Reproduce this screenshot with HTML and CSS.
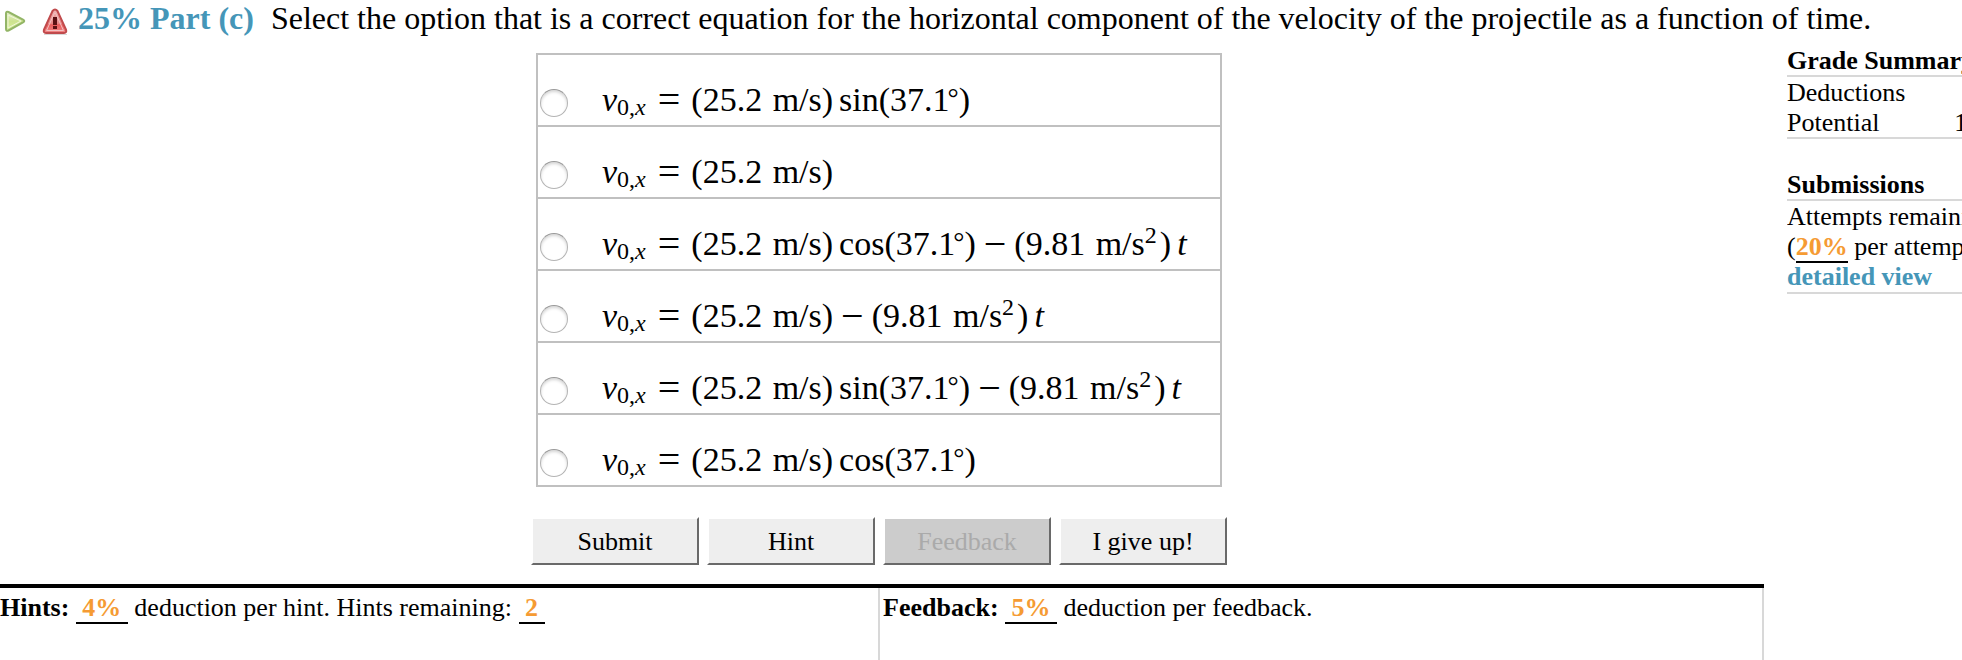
FILE: index.html
```html
<!DOCTYPE html>
<html lang="en">
<head>
    <meta charset="UTF-8">
    <title>Part (c) - Projectile Motion</title>
    <link rel="stylesheet" href="styles.css">
</head>
<body>
    <div class="question">
        <svg class="icon" width="26" height="28" viewBox="0 0 26 28">
            <defs>
                <linearGradient id="playFill" x1="0" y1="0" x2="0" y2="1">
                    <stop offset="0" stop-color="#e6efd0"/>
                    <stop offset="0.5" stop-color="#cde38f"/>
                    <stop offset="1" stop-color="#d9f09a"/>
                </linearGradient>
            </defs>
            <path d="M2 5.500 Q2 3 4.500 4 L19 11.500 Q21.500 13 19 14.500 L4.500 22.500 Q2 23.500 2 21 Z" fill="url(#playFill)" stroke="#93b567" stroke-width="2"/>
            <path d="M4 7 L4 20 L17 13 Z" fill="none" stroke="#f1f7dc" stroke-width="1"/>
        </svg>
        <svg class="icon" width="28" height="28" viewBox="0 0 28 28">
            <defs>
                <linearGradient id="warnFill" x1="0" y1="0" x2="0" y2="1">
                    <stop offset="0" stop-color="#efb5b5"/>
                    <stop offset="0.6" stop-color="#e88484"/>
                    <stop offset="0.65" stop-color="#e85a5a"/>
                    <stop offset="1" stop-color="#f08a8a"/>
                </linearGradient>
            </defs>
            <path d="M4 26.500 H27" stroke="#d8d8d8" stroke-width="1"/>
            <path d="M12.500 3 Q15 0 17.500 3 L26 21.500 Q27 25 24 25 H6 Q3 25 4 21.500 Z" fill="url(#warnFill)" stroke="#c04a4c" stroke-width="2"/>
            <path d="M14.500 5 H15.500 L23.500 22.500 H6.500 Z" fill="none" stroke="#f3c3c3" stroke-width="1"/>
            <rect x="13" y="9" width="4" height="8" fill="#5c1013"/>
            <rect x="13" y="18" width="4" height="3" fill="#5c1013"/>
        </svg>
        <b class="part">25% Part (c)</b>
        <span>Select the option that is a correct equation for the horizontal component of the velocity of the projectile as a function of time.</span>
    </div>

    <div class="content">
        <div class="main">
            <form class="answer">
                <table class="options">
                    <tr>
                        <td class="pick"><input type="radio" name="answer" id="opt1"></td>
                        <td><label for="opt1"><i>v</i><sub>0,<i>x</i></sub><span class="op">=</span>(25.2 <span class="unit">m/s)</span><span class="fn">sin</span>(37.1<span class="deg">°</span>)</label></td>
                    </tr>
                    <tr>
                        <td class="pick"><input type="radio" name="answer" id="opt2"></td>
                        <td><label for="opt2"><i>v</i><sub>0,<i>x</i></sub><span class="op">=</span>(25.2 <span class="unit">m/s)</span></label></td>
                    </tr>
                    <tr>
                        <td class="pick"><input type="radio" name="answer" id="opt3"></td>
                        <td><label for="opt3"><i>v</i><sub>0,<i>x</i></sub><span class="op">=</span>(25.2 <span class="unit">m/s)</span><span class="fn">cos</span>(37.1<span class="deg">°</span>)<span class="op minus">−</span>(9.81 <span class="unit">m/s<sup>2</sup>)</span><i class="fn">t</i></label></td>
                    </tr>
                    <tr>
                        <td class="pick"><input type="radio" name="answer" id="opt4"></td>
                        <td><label for="opt4"><i>v</i><sub>0,<i>x</i></sub><span class="op">=</span>(25.2 <span class="unit">m/s)</span><span class="op minus">−</span>(9.81 <span class="unit">m/s<sup>2</sup>)</span><i class="fn">t</i></label></td>
                    </tr>
                    <tr>
                        <td class="pick"><input type="radio" name="answer" id="opt5"></td>
                        <td><label for="opt5"><i>v</i><sub>0,<i>x</i></sub><span class="op">=</span>(25.2 <span class="unit">m/s)</span><span class="fn">sin</span>(37.1<span class="deg">°</span>)<span class="op minus">−</span>(9.81 <span class="unit">m/s<sup>2</sup>)</span><i class="fn">t</i></label></td>
                    </tr>
                    <tr>
                        <td class="pick"><input type="radio" name="answer" id="opt6"></td>
                        <td><label for="opt6"><i>v</i><sub>0,<i>x</i></sub><span class="op">=</span>(25.2 <span class="unit">m/s)</span><span class="fn">cos</span>(37.1<span class="deg">°</span>)</label></td>
                    </tr>
                </table>
                <div class="buttons">
                    <button type="button">Submit</button>
                    <button type="button">Hint</button>
                    <button type="button" disabled>Feedback</button>
                    <button type="button">I give up!</button>
                </div>
            </form>

            <div class="info">
                <div class="info-cell"><b>Hints:</b> <span class="value">&nbsp;4%&nbsp;</span> deduction per hint. Hints remaining: <span class="value">&nbsp;2&nbsp;</span></div>
                <div class="info-cell"><b>Feedback:</b> <span class="value">&nbsp;5%&nbsp;</span> deduction per feedback.</div>
            </div>
        </div>

        <div class="sidebar">
            <h2>Grade Summary</h2>
            <table class="grades">
                <tr><td>Deductions</td><td>0%</td></tr>
                <tr><td>Potential</td><td>100%</td></tr>
            </table>
            <h2>Submissions</h2>
            <div class="attempts">
                Attempts remaining:<br>
                (<span class="value">20%</span> per attempt)<br>
                <a href="#">detailed view</a>
            </div>
        </div>
    </div>
</body>
</html>
```
FILE: styles.css
```css
body {
    margin: 0;
    background-color: #fff;
    color: #000;
    font-family: "Liberation Serif", "Times New Roman", serif;
    font-size: 26px;
    line-height: 30px;
    overflow-x: hidden;
}
.question {
    display: flex;
    height: 36px;
    padding-left: 4px;
    font-size: 32px;
    line-height: 36px;
    white-space: nowrap;
}
.icon {
    flex: none;
    margin: 8px 10px 0 0;
}
.part {
    margin-right: 17px;
    color: #4596b8;
}
.content {
    display: flex;
    align-items: flex-start;
}
.main {
    flex: 1;
    min-width: 0;
}
.answer {
    display: flex;
    flex-direction: column;
    align-items: center;
    padding: 17px 6px 19px 0;
}
.options {
    width: 686px;
    border-collapse: collapse;
    border: 2px solid #c0c0c0;
}
.options tr {
    height: 72px;
}
.options td {
    padding: 0 0 5px;
    border-bottom: 2px solid #c0c0c0;
    vertical-align: bottom;
    font-size: 34px;
    line-height: 40px;
    white-space: nowrap;
}
.options td.pick {
    width: 65px;
    padding: 0 0 8px 2px;
    box-sizing: border-box;
}
.pick input {
    appearance: none;
    display: block;
    width: 28px;
    height: 28px;
    margin: 0;
    border: 1px solid #b4b4b4;
    border-top-color: #999;
    border-radius: 50%;
    background-color: #fff;
    box-shadow: inset 0 2px 3px rgba(0, 0, 0, 0.16);
}
.pick input:checked {
    background: radial-gradient(#444 30%, #fff 35%);
}
.options sub, .options sup {
    font-size: 24px;
    line-height: 0;
}
.options sub {
    vertical-align: -4px;
}
.options sup {
    margin-right: 3px;
    vertical-align: 12px;
}
.op {
    margin: 0 11px 0 12px;
    font-size: 40px;
    line-height: 0;
    vertical-align: -2px;
}
.minus {
    margin: 0 8px;
}
.unit {
    margin-left: 2px;
}
.fn {
    margin-left: 6px;
}
.deg {
    margin-left: -2px;
    font-size: 28px;
    line-height: 0;
    vertical-align: 4px;
}
.buttons {
    display: flex;
    gap: 8px;
    margin-top: 30px;
}
.buttons button {
    width: 168px;
    height: 48px;
    padding: 2px 0 0;
    border: 2px solid #fff;
    border-right-color: #696969;
    border-bottom-color: #696969;
    background-color: #eee;
    color: #000;
    font-family: inherit;
    font-size: 26px;
    line-height: 30px;
}
.buttons button:disabled {
    background-color: #ccc;
    color: #aaa;
}
.info {
    display: grid;
    grid-template-columns: 1fr calc(50% + 2px);
    min-height: 72px;
    border-top: 4px solid #000;
}
.info-cell {
    padding: 5px 0 0 3px;
    border-right: 2px solid #d8d8d8;
}
.info-cell:first-child {
    padding-left: 0;
}
.value {
    border-bottom: 2px solid #000;
    color: #f59b33;
    font-weight: bold;
}
.sidebar {
    flex: 0 0 175px;
    margin: 9px 0 0 23px;
    overflow: hidden;
    white-space: nowrap;
}
.sidebar h2 {
    margin: 0;
    padding-top: 2px;
    border-bottom: 2px solid #d8d8d8;
    font-size: 26px;
    line-height: 28px;
}
.grades {
    width: 228px;
    margin-bottom: 30px;
    border-collapse: collapse;
    border-bottom: 2px solid #d8d8d8;
}
.grades td {
    padding: 2px 0 0;
    line-height: 28px;
}
.grades td:last-child {
    text-align: right;
}
.attempts {
    padding-top: 1px;
    border-bottom: 2px solid #d8d8d8;
}
.attempts a {
    color: #4596b8;
    font-weight: bold;
    text-decoration: none;
}
```
